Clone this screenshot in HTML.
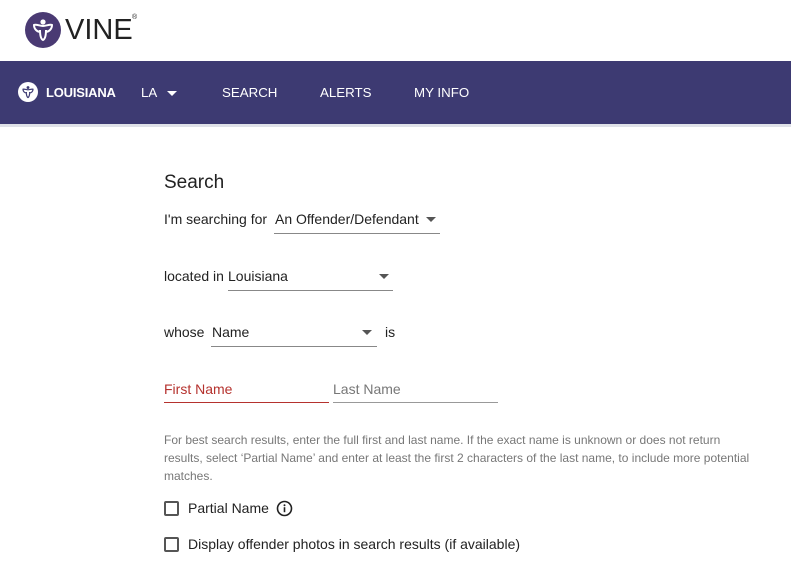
<!DOCTYPE html>
<html><head><style>
*{margin:0;padding:0;box-sizing:border-box}
body{width:791px;height:571px;background:#fff;font-family:"Liberation Sans",sans-serif;position:relative;overflow:hidden;color:#222}
.a{position:absolute;white-space:nowrap}
.nav{position:absolute;left:0;top:61px;width:791px;height:63px;background:#3d3a72}
.line{position:absolute;left:0;top:124px;width:791px;height:3px;background:#dfe1e8}
.nv{position:absolute;top:85px;color:#fff;font-size:13.3px}
.sel{position:absolute;border-bottom:1px solid #888;font-size:14px;color:#222}
.tri{position:absolute;width:0;height:0;border-left:5px solid transparent;border-right:5px solid transparent;border-top:5px solid #555}
.cb{position:absolute;width:15px;height:15px;border:2px solid #555;border-radius:2px}
</style></head><body>
<svg class="a" style="left:25px;top:12px" width="36" height="36" viewBox="0 0 36 36"><circle cx="18" cy="18" r="18" fill="#4a3a73"/><circle cx="18" cy="10" r="2.6" fill="#fff"/><path d="M18 14c-3 0-7-2-9-1 0 4 3 7 7 7M18 14c3 0 7-2 9-1 0 4-3 7-7 7M15 18c0 5 1 9 3 10 2-1 3-5 3-10" stroke="#fff" stroke-width="2" fill="none"/></svg>
<div class="a" style="left:65px;top:14px;font-size:29px;color:#222">VINE</div>
<div class="a" style="left:132px;top:14px;font-size:7px">®</div>
<div class="nav"></div><div class="line"></div>
<svg class="a" style="left:18px;top:82px" width="20" height="20" viewBox="0 0 36 36"><circle cx="18" cy="18" r="18" fill="#fff"/><circle cx="18" cy="10" r="2.6" fill="#3d3a72"/><path d="M18 14c-3 0-7-2-9-1 0 4 3 7 7 7M18 14c3 0 7-2 9-1 0 4-3 7-7 7M15 18c0 5 1 9 3 10 2-1 3-5 3-10" stroke="#3d3a72" stroke-width="2.2" fill="none"/></svg>
<div class="nv" style="left:46px;font-weight:bold;font-size:13px;letter-spacing:-0.2px">LOUISIANA</div>
<div class="nv" style="left:141px">LA</div>
<div class="tri" style="left:167px;top:91px;border-top-color:#fff"></div>
<div class="nv" style="left:222px">SEARCH</div>
<div class="nv" style="left:320px">ALERTS</div>
<div class="nv" style="left:414px">MY INFO</div>
<div class="a" style="left:164px;top:172px;font-size:19px;color:#222">Search</div>
<div class="a" style="left:164px;top:211px;font-size:14px">I'm searching for</div>
<div class="sel" style="left:274px;top:211px;width:166px;height:23px;padding-left:1px">An Offender/Defendant</div>
<div class="tri" style="left:426px;top:217px"></div>
<div class="a" style="left:164px;top:268px;font-size:14px">located in</div>
<div class="sel" style="left:228px;top:268px;width:165px;height:23px">Louisiana</div>
<div class="tri" style="left:379px;top:274px"></div>
<div class="a" style="left:164px;top:324px;font-size:14px">whose</div>
<div class="sel" style="left:211px;top:324px;width:166px;height:23px;padding-left:1px">Name</div>
<div class="tri" style="left:362px;top:330px"></div>
<div class="a" style="left:385px;top:324px;font-size:14px">is</div>
<div class="a" style="left:164px;top:381px;font-size:14px;color:#b5322e">First Name</div>
<div class="a" style="left:164px;top:402px;width:165px;height:1px;background:#b5322e"></div>
<div class="a" style="left:333px;top:381px;font-size:14px;color:#777">Last Name</div>
<div class="a" style="left:333px;top:402px;width:165px;height:1px;background:#999"></div>
<div class="a" style="left:164px;top:431px;font-size:12px;color:#777;line-height:18px">For best search results, enter the full first and last name. If the exact name is unknown or does not return<br>results, select ‘Partial Name’ and enter at least the first 2 characters of the last name, to include more potential<br>matches.</div>
<div class="cb" style="left:164px;top:501px"></div>
<div class="a" style="left:188px;top:500px;font-size:14px">Partial Name</div>
<svg class="a" style="left:276px;top:500px" width="17" height="17" viewBox="0 0 17 17"><circle cx="8.5" cy="8.5" r="7" stroke="#222" stroke-width="1.6" fill="none"/><circle cx="8.5" cy="5.2" r="1" fill="#222"/><rect x="7.7" y="7.2" width="1.6" height="5" fill="#222"/></svg>
<div class="cb" style="left:164px;top:537px"></div>
<div class="a" style="left:188px;top:536px;font-size:14px">Display offender photos in search results (if available)</div>
</body></html>
